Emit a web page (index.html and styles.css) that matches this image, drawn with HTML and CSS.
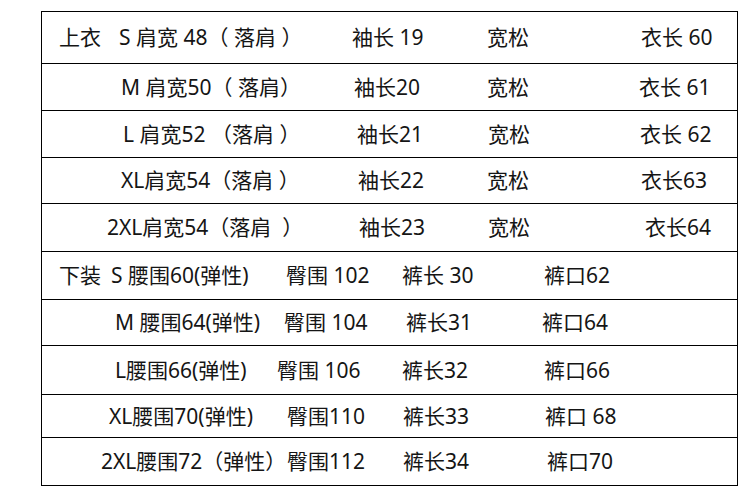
FILE: index.html
```html
<!DOCTYPE html>
<html lang="zh-CN">
<head>
<meta charset="utf-8">
<title>尺码表</title>
<link rel="stylesheet" href="styles.css">
</head>
<body>
<div class="size-table">
  <div class="row r1"><span>上衣</span><span>S 肩宽 48（ 落肩 ）</span><span>袖长 19</span><span>宽松</span><span>衣长 60</span></div>
  <div class="row r2"><span>M 肩宽50（ 落肩）</span><span>袖长20</span><span>宽松</span><span>衣长 61</span></div>
  <div class="row r3"><span>L 肩宽52 （落肩 ）</span><span>袖长21</span><span>宽松</span><span>衣长 62</span></div>
  <div class="row r4"><span>XL肩宽54（落肩 ）</span><span>袖长22</span><span>宽松</span><span>衣长63</span></div>
  <div class="row r5"><span>2XL肩宽54（落肩  ）</span><span>袖长23</span><span>宽松</span><span>衣长64</span></div>
  <div class="row r6"><span>下装</span><span>S 腰围60(弹性)</span><span>臀围 102</span><span>裤长 30</span><span>裤口62</span></div>
  <div class="row r7"><span>M 腰围64(弹性)</span><span>臀围 104</span><span>裤长31</span><span>裤口64</span></div>
  <div class="row r8"><span>L腰围66(弹性)</span><span>臀围 106</span><span>裤长32</span><span>裤口66</span></div>
  <div class="row r9"><span>XL腰围70(弹性)</span><span>臀围110</span><span>裤长33</span><span>裤口 68</span></div>
  <div class="row r10"><span>2XL腰围72（弹性）</span><span>臀围112</span><span>裤长34</span><span>裤口70</span></div>
</div>
</body>
</html>
```
FILE: styles.css
```css
* { box-sizing: border-box; }
html, body { margin: 0; padding: 0; background: #fff; }
body {
  font-family: "Noto Sans", "Noto Sans CJK SC", sans-serif;
  font-size: 21px;
  color: #151515;
}
.size-table {
  margin: 11px 0 0 41px;
  width: 697px;
  border: 1px solid #000;
  border-bottom: none;
}
.row {
  display: grid;
  align-items: center;
  border-bottom: 1px solid #000;
  white-space: pre;
  line-height: 1;
}
.row span { display: block; }

.r1 { height: 52px; padding-left: 17px; grid-template-columns: 60px 233px 135px 154px auto; }
.r2 { height: 47px; padding-left: 79px; grid-template-columns: 233px 133px 152px auto; }
.r3 { height: 47px; padding-left: 81px; grid-template-columns: 234px 131px 152px auto; }
.r4 { height: 46px; padding-left: 79px; grid-template-columns: 237px 129px 154px auto; }
.r5 { height: 48px; padding-left: 65px; grid-template-columns: 252px 129px 157px auto; }
.r6 { height: 48px; padding-left: 17px; grid-template-columns: 52px 175px 116px 142px auto; }
.r7 { height: 46px; padding-left: 73px; grid-template-columns: 169px 122px 136px auto; }
.r8 { height: 49px; padding-left: 73px; grid-template-columns: 162px 125px 142px auto; }
.r9 { height: 43px; padding-left: 67px; grid-template-columns: 178px 116px 142px auto; }
.r10 { height: 48px; padding-left: 59px; grid-template-columns: 186px 116px 144px auto; }
```
